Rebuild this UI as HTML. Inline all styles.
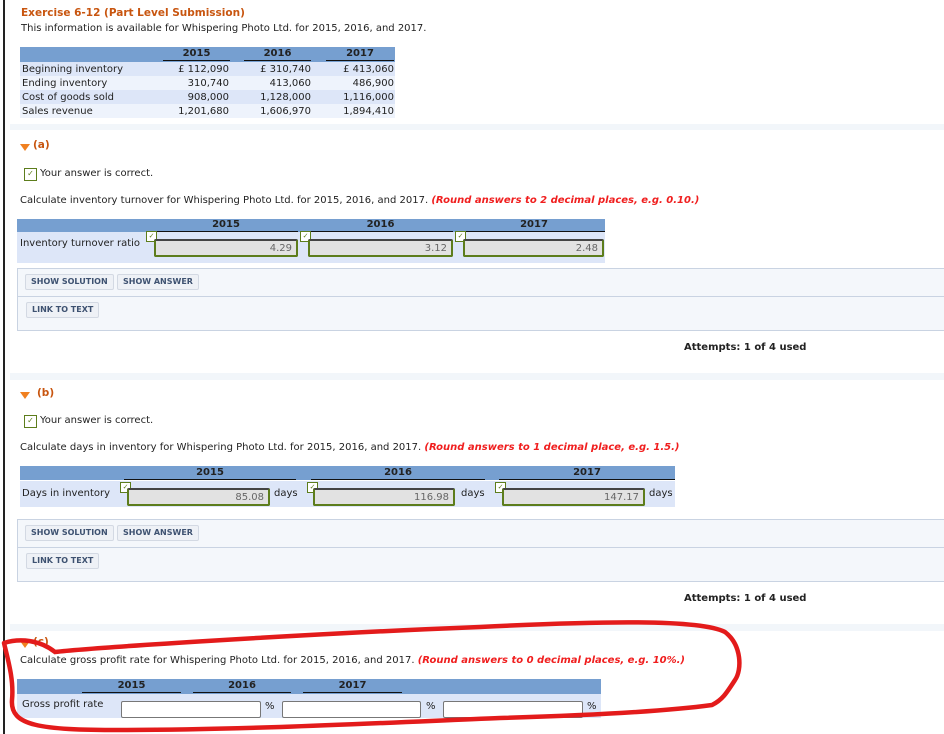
<!DOCTYPE html>
<html><head><meta charset="utf-8"><style>
*{margin:0;padding:0;box-sizing:border-box}
body{width:944px;height:734px;position:relative;overflow:hidden;background:#fff;font-family:"DejaVu Sans","Liberation Sans",sans-serif;font-size:10px;color:#222}
.a{position:absolute;white-space:nowrap}
.vl{position:absolute;left:3px;top:0;width:2px;height:734px;background:#222}
.band{position:absolute;left:10px;width:934px;background:#f2f6fa}
.title{color:#c8550f;font-weight:bold;font-size:10.5px}
.hdr{position:absolute;background:#769fd0}
.yr{position:absolute;top:0;font-weight:bold;text-align:center;border-bottom:1.5px solid #111;line-height:12px}
.row{position:absolute;background:#dde6f8}
.inp{position:absolute;height:18px;background:#e2e2e2;border:2px solid #5d7d1c;border-radius:2px;border-top-color:#444;text-align:right;color:#666;padding-right:4px;line-height:16px}
.inpw{position:absolute;height:17px;background:#fff;border:1px solid #777;border-radius:2px}
.ck{position:absolute;width:11px;height:11px;border:1.5px solid #5d7d1c;background:#fff;color:#5d7d1c;font-size:7px;line-height:8px;text-align:center}
.ck2{position:absolute;width:13px;height:13px;border:1.5px solid #5d7d1c;background:#fff;color:#5d7d1c;font-size:8px;line-height:10px;text-align:center}
.box{position:absolute;left:17px;width:940px;height:63px;border:1px solid #c9d3e2;background:#f4f7fb}
.box .dv{position:absolute;left:0;right:0;top:27px;border-top:1px solid #c9d3e2}
.btn{position:absolute;height:16px;border:1px solid #d3d9e3;border-radius:2px;background:#eef1f6;color:#3e5271;font-weight:bold;font-size:8px;line-height:14px;padding:0 5px}
.att{font-weight:bold;font-size:10px}
.tri{position:absolute;width:0;height:0;border-left:5px solid transparent;border-right:5px solid transparent;border-top:7px solid #f08020}
.sec{color:#c8550f;font-weight:bold;font-size:10.5px}
.red{color:#f01e1e;font-weight:bold;font-style:italic}
</style></head><body>
<div class="vl"></div>

<div class="a title" style="left:21px;top:7px">Exercise 6-12 (Part Level Submission)</div>
<div class="a" style="left:21px;top:23px">This information is available for Whispering Photo Ltd. for 2015, 2016, and 2017.</div>

<div class="hdr" style="left:20px;top:47px;width:375px;height:15px"></div>
<div class="yr" style="left:163px;top:48px;width:67px">2015</div>
<div class="yr" style="left:244px;top:48px;width:67px">2016</div>
<div class="yr" style="left:326px;top:48px;width:68px">2017</div>
<div class="row" style="left:20px;top:62px;width:375px;height:14px;background:#dde6f8"></div>
<div class="row" style="left:20px;top:76px;width:375px;height:14px;background:#eef3fc"></div>
<div class="row" style="left:20px;top:90px;width:375px;height:14px;background:#dde6f8"></div>
<div class="row" style="left:20px;top:104px;width:375px;height:14px;background:#eef3fc"></div>
<div class="a" style="left:22px;top:63px;line-height:14px">Beginning inventory<br>Ending inventory<br>Cost of goods sold<br>Sales revenue</div>
<div class="a" style="left:160px;top:63px;width:69px;text-align:right;line-height:14px">£ 112,090<br>310,740<br>908,000<br>1,201,680</div>
<div class="a" style="left:241px;top:63px;width:70px;text-align:right;line-height:14px">£ 310,740<br>413,060<br>1,128,000<br>1,606,970</div>
<div class="a" style="left:323px;top:63px;width:71px;text-align:right;line-height:14px">£ 413,060<br>486,900<br>1,116,000<br>1,894,410</div>

<div class="band" style="top:124px;height:6px"></div>

<!-- (a) -->
<div class="tri" style="left:20px;top:144px"></div>
<div class="a sec" style="left:33px;top:139px">(a)</div>
<div class="ck2" style="left:24px;top:168px">✓</div>
<div class="a" style="left:40px;top:168px">Your answer is correct.</div>
<div class="a" style="left:20px;top:195px">Calculate inventory turnover for Whispering Photo Ltd. for 2015, 2016, and 2017. <span class="red">(Round answers to 2 decimal places, e.g. 0.10.)</span></div>
<div class="hdr" style="left:17px;top:219px;width:588px;height:13px"></div>
<div class="yr" style="left:154px;top:219px;width:144px">2015</div>
<div class="yr" style="left:308px;top:219px;width:145px">2016</div>
<div class="yr" style="left:463px;top:219px;width:142px">2017</div>
<div class="row" style="left:17px;top:232px;width:588px;height:31px"></div>
<div class="a" style="left:20px;top:238px">Inventory turnover ratio</div>
<div class="ck" style="left:146px;top:231px">✓</div>
<div class="inp" style="left:154px;top:239px;width:144px">4.29</div>
<div class="ck" style="left:300px;top:231px">✓</div>
<div class="inp" style="left:308px;top:239px;width:145px">3.12</div>
<div class="ck" style="left:455px;top:231px">✓</div>
<div class="inp" style="left:463px;top:239px;width:141px">2.48</div>

<div class="box" style="top:268px"><div class="dv"></div></div>
<div class="btn" style="left:25px;top:274px">SHOW SOLUTION</div>
<div class="btn" style="left:117px;top:274px">SHOW ANSWER</div>
<div class="btn" style="left:26px;top:302px">LINK TO TEXT</div>
<div class="a att" style="left:684px;top:342px">Attempts: 1 of 4 used</div>

<div class="band" style="top:373px;height:7px"></div>

<!-- (b) -->
<div class="tri" style="left:20px;top:392px"></div>
<div class="a sec" style="left:37px;top:387px">(b)</div>
<div class="ck2" style="left:24px;top:415px">✓</div>
<div class="a" style="left:40px;top:415px">Your answer is correct.</div>
<div class="a" style="left:20px;top:442px">Calculate days in inventory for Whispering Photo Ltd. for 2015, 2016, and 2017. <span class="red">(Round answers to 1 decimal place, e.g. 1.5.)</span></div>
<div class="hdr" style="left:20px;top:466px;width:655px;height:14px"></div>
<div class="yr" style="left:124px;top:467px;width:172px">2015</div>
<div class="yr" style="left:311px;top:467px;width:174px">2016</div>
<div class="yr" style="left:499px;top:467px;width:176px">2017</div>
<div class="row" style="left:20px;top:481px;width:655px;height:26px"></div>
<div class="a" style="left:22px;top:488px">Days in inventory</div>
<div class="ck" style="left:120px;top:482px">✓</div>
<div class="inp" style="left:127px;top:488px;width:143px">85.08</div>
<div class="a" style="left:274px;top:488px">days</div>
<div class="ck" style="left:307px;top:482px">✓</div>
<div class="inp" style="left:313px;top:488px;width:142px">116.98</div>
<div class="a" style="left:461px;top:488px">days</div>
<div class="ck" style="left:495px;top:482px">✓</div>
<div class="inp" style="left:502px;top:488px;width:143px">147.17</div>
<div class="a" style="left:649px;top:488px">days</div>

<div class="box" style="top:519px"><div class="dv"></div></div>
<div class="btn" style="left:25px;top:525px">SHOW SOLUTION</div>
<div class="btn" style="left:117px;top:525px">SHOW ANSWER</div>
<div class="btn" style="left:26px;top:553px">LINK TO TEXT</div>
<div class="a att" style="left:684px;top:593px">Attempts: 1 of 4 used</div>

<div class="band" style="top:624px;height:7px"></div>

<!-- (c) -->
<div class="tri" style="left:20px;top:641px"></div>
<div class="a sec" style="left:33px;top:636px">(c)</div>
<div class="a" style="left:20px;top:655px">Calculate gross profit rate for Whispering Photo Ltd. for 2015, 2016, and 2017. <span class="red">(Round answers to 0 decimal places, e.g. 10%.)</span></div>
<div class="hdr" style="left:17px;top:679px;width:584px;height:15px"></div>
<div class="yr" style="left:82px;top:680px;width:99px">2015</div>
<div class="yr" style="left:193px;top:680px;width:98px">2016</div>
<div class="yr" style="left:303px;top:680px;width:99px">2017</div>
<div class="row" style="left:17px;top:694px;width:584px;height:24px"></div>
<div class="a" style="left:22px;top:699px">Gross profit rate</div>
<div class="inpw" style="left:121px;top:701px;width:140px"></div>
<div class="a" style="left:265px;top:701px">%</div>
<div class="inpw" style="left:282px;top:701px;width:139px"></div>
<div class="a" style="left:426px;top:701px">%</div>
<div class="inpw" style="left:443px;top:701px;width:140px"></div>
<div class="a" style="left:587px;top:701px">%</div>

<svg style="position:absolute;left:0;top:0" width="944" height="734">
<path d="M4,643 C20,638 40,640 55,652 C90,648 300,634 480,627 C600,621 700,619 725,632 C742,645 742,670 735,680 C726,694 722,700 712,705 C660,712 570,716 500,718 C400,722 250,730 120,730 C40,730 10,726 12,700 C14,680 8,660 4,643" fill="none" stroke="#e31b1b" stroke-width="4.5" stroke-linecap="round"/>
</svg>
</body></html>
